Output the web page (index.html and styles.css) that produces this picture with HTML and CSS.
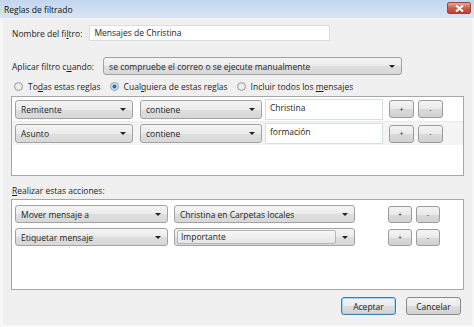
FILE: index.html
```html
<!DOCTYPE html>
<html>
<head>
    <title>Reglas de filtrado</title>
    <link rel="stylesheet" href="styles.css">
</head>
<body>
    <div class="window">
        <header class="titlebar">
            <span class="title">Reglas de filtrado</span>
            <button class="close-btn">
                <svg width="9" height="7" viewBox="0 0 9 7"><path d="M1 0.5 L8 6.5 M8 0.5 L1 6.5" stroke="#fff" stroke-width="2"/></svg>
            </button>
        </header>

        <main class="dialog">
            <div class="field-row name-row">
                <label class="field-label">Nombre del fi<u>l</u>tro:</label>
                <div class="textbox name-box">Mensajes de Christina</div>
            </div>

            <div class="field-row apply-row">
                <label class="field-label">Aplicar filtro c<u>u</u>ando:</label>
                <div class="menulist apply-list"><span>se compruebe el correo o se ejecute manualmente</span><i class="arrow"></i></div>
            </div>

            <div class="radio-row">
                <label class="radio"><span class="dot"></span><span>To<u>d</u>as estas reglas</span></label>
                <label class="radio"><span class="dot checked"></span><span>Cual<u>q</u>uiera de estas reglas</span></label>
                <label class="radio"><span class="dot"></span><span>Incluir todos los <u>m</u>ensajes</span></label>
            </div>

            <div class="list-box rules">
                <div class="rule-row">
                    <div class="menulist sel-field"><span>Remitente</span><i class="arrow"></i></div>
                    <div class="menulist sel-op"><span>contiene</span><i class="arrow"></i></div>
                    <div class="textbox rule-value">Christina</div>
                    <button class="small-btn plus">+</button>
                    <button class="small-btn">-</button>
                </div>
                <div class="rule-row alt">
                    <div class="menulist sel-field"><span>Asunto</span><i class="arrow"></i></div>
                    <div class="menulist sel-op"><span>contiene</span><i class="arrow"></i></div>
                    <div class="textbox rule-value">formación</div>
                    <button class="small-btn plus">+</button>
                    <button class="small-btn">-</button>
                </div>
            </div>

            <div class="section-label"><u>R</u>ealizar estas acciones:</div>

            <div class="list-box actions">
                <div class="action-row">
                    <div class="menulist sel-action"><span>Mover mensaje a</span><i class="arrow"></i></div>
                    <div class="menulist sel-target"><span>Christina en Carpetas locales</span><i class="arrow"></i></div>
                    <button class="small-btn plus">+</button>
                    <button class="small-btn">-</button>
                </div>
                <div class="action-row">
                    <div class="menulist sel-action"><span>Etiquetar mensaje</span><i class="arrow"></i></div>
                    <div class="menulist sel-target tag-list"><span class="tag-inner">Importante</span><i class="arrow"></i></div>
                    <button class="small-btn plus">+</button>
                    <button class="small-btn">-</button>
                </div>
            </div>

            <footer class="dialog-buttons">
                <button class="push-btn default">Aceptar</button>
                <button class="push-btn">Cancelar</button>
            </footer>
        </main>
    </div>
</body>
</html>
```

FILE: styles.css
```css
* {
    box-sizing: border-box;
}

body {
    margin: 0;
    font-family: "Open Sans", "Noto Sans", sans-serif;
    font-size: 8.5px;
    color: #1e1e1e;
    background: #f0f0f0;
}

u {
    text-decoration-thickness: 1px;
    text-underline-offset: 1px;
}

.window {
    width: 474px;
    height: 327px;
    background: #f0f0f0;
    border-left: 3px solid #f7f7f7;
    border-right: 2px solid #f7f7f7;
    border-bottom: 2px solid #fafafa;
}

.titlebar {
    height: 18px;
    margin-left: -3px;
    margin-right: -2px;
    display: flex;
    justify-content: space-between;
    align-items: center;
    padding: 0 3px 0 4px;
    background: linear-gradient(to bottom, #c2d6ee, #d9e5f3);
    color: #111;
    font-size: 8.5px;
}

.close-btn {
    width: 24px;
    height: 12px;
    padding: 0;
    margin-top: -2px;
    display: flex;
    align-items: center;
    justify-content: center;
    border: 1px solid #8e4a47;
    border-radius: 2px;
    background: linear-gradient(to bottom, #e9a596, #d15c48 50%, #c0412d);
}

.dialog {
    padding: 7px 9px 0 7px;
}

.field-row {
    display: flex;
    align-items: center;
}

.field-label {
    padding-left: 2px;
}

.name-row {
    height: 16px;
}

.name-box {
    margin-left: 7px;
    width: 241px;
    height: 16px;
}

.apply-row {
    margin-top: 16px;
    height: 18px;
}

.apply-list {
    margin-left: 9px;
    width: 299px;
    height: 18px;
}

.textbox {
    background: #fff;
    border: 1px solid #d8dde4;
    padding: 0 4px;
    line-height: 14px;
    white-space: nowrap;
}

.menulist {
    display: flex;
    align-items: center;
    justify-content: space-between;
    padding: 0 6px 0 5px;
    border: 1px solid #a2a2a2;
    border-radius: 3px;
    background: linear-gradient(to bottom, #f5f5f5, #ebebeb 50%, #dedede 51%, #d8d8d8);
    white-space: nowrap;
}

.arrow {
    width: 0;
    height: 0;
    border-left: 3px solid transparent;
    border-right: 3px solid transparent;
    border-top: 3px solid #222;
}

.radio-row {
    display: flex;
    align-items: center;
    height: 12px;
    margin-top: 5px;
    padding-left: 4px;
}

.radio {
    display: flex;
    align-items: center;
    margin-right: 9px;
}

.dot {
    width: 9px;
    height: 9px;
    border-radius: 50%;
    border: 1px solid #9c9c9c;
    background: radial-gradient(circle, #f6f6f6, #dcdcdc);
    margin-right: 5px;
}

.dot.checked {
    background: radial-gradient(circle, #2a6fb0 0 1.6px, #9fcfee 2.2px, #f0f0f0 3.5px);
}

.list-box {
    background: #fff;
    border: 1px solid #a7a7a7;
    margin-left: 1px;
    width: 453px;
}

.rules {
    margin-top: 4px;
    height: 80px;
}

.rule-row {
    display: flex;
    align-items: center;
    height: 24px;
    padding-left: 3px;
}

.rule-row.alt {
    background: #f4f4f4;
    border-top: 1px solid #ececec;
}

.sel-field {
    width: 118px;
    height: 19px;
}

.sel-op {
    width: 122px;
    height: 19px;
    margin-left: 7px;
}

.rule-value {
    width: 118px;
    height: 21px;
    margin-left: 3px;
    padding-top: 2px;
    line-height: 11px;
}

.small-btn {
    width: 25px;
    height: 18px;
    padding: 0;
    border: 1px solid #9b9b9b;
    border-radius: 3px;
    background: linear-gradient(to bottom, #f4f4f4, #e9e9e9 50%, #dadada 51%, #d2d2d2);
    font-family: "Open Sans", sans-serif;
    font-size: 7px;
    color: #333;
    margin-left: 4px;
}

.small-btn.plus {
    margin-left: 6px;
}

.section-label {
    margin-top: 9px;
    padding-left: 2px;
    line-height: 12px;
}

.actions {
    margin-top: 2px;
    height: 91px;
    padding-top: 5px;
}

.action-row {
    display: flex;
    align-items: center;
    height: 18px;
    margin-bottom: 5px;
    padding-left: 3px;
}

.sel-action {
    width: 153px;
    height: 18px;
}

.sel-target {
    width: 181px;
    height: 18px;
    margin-left: 6px;
}

.action-row .small-btn {
    width: 24px;
    height: 17px;
}

.action-row .small-btn.plus {
    margin-left: 33px;
}

.tag-list {
    padding-left: 2px;
}

.tag-inner {
    flex: 1;
    height: 14px;
    line-height: 12px;
    margin-right: 6px;
    padding-left: 3px;
    border: 1px solid #b5b5b5;
    border-radius: 2px;
    background: linear-gradient(to bottom, #f7f7f7, #e6e6e6);
}

.dialog-buttons {
    display: flex;
    justify-content: flex-end;
    margin-top: 7px;
    padding-right: 2px;
}

.push-btn {
    width: 55px;
    height: 18px;
    padding: 0;
    margin-left: 10px;
    border: 1px solid #8a8a8a;
    border-radius: 3px;
    background: linear-gradient(to bottom, #f4f4f4, #ebebeb 50%, #dddddd 51%, #d3d3d3);
    font-family: "Open Sans", sans-serif;
    font-size: 8.5px;
    color: #1e1e1e;
}

.push-btn.default {
    border-color: #3c7fb1;
    box-shadow: inset 0 0 0 1px #9fd5f5;
}
```
